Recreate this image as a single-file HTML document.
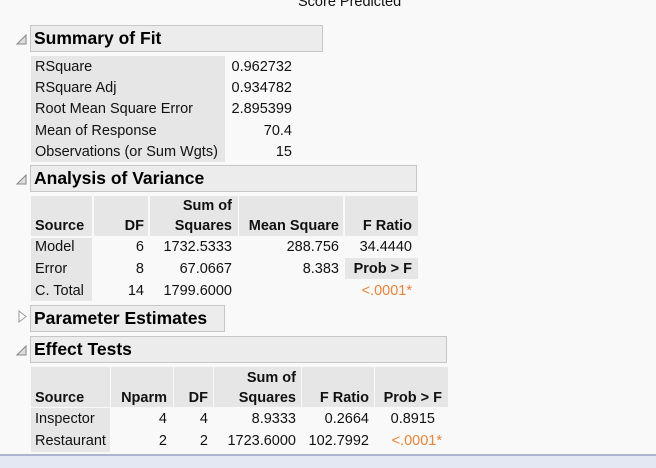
<!DOCTYPE html><html><head><style>
body{margin:0;width:656px;height:468px;background:#f9f9f9;position:relative;overflow:hidden;font-family:"Liberation Sans",sans-serif;font-size:14.5px;color:#111}
div{position:absolute;box-sizing:border-box}
.h{background:#ececec;border:1px solid #c6c6c6;font-weight:bold;font-size:17.5px;padding:2px 0 0 3px;line-height:21px;color:#000}
.g{background:#e6e6e6}
.t{white-space:nowrap;line-height:16px}
.r{text-align:right}
.b{font-weight:bold}
.o{color:#e8843a}
</style></head><body>
<div class="t" style="left:298px;top:-6px">Score Predicted</div>

<svg style="position:absolute;left:16px;top:34px" width="12" height="12"><path d="M1 10 L10 1 L10 10 Z" fill="#ddd" stroke="#888"/></svg>
<div class="h" style="left:30px;top:25px;width:293px;height:27px">Summary of Fit</div>
<div class="g" style="left:31px;top:56px;width:194px;height:106px"></div>
<div class="t" style="left:35px;top:59px">RSquare</div><div class="t r" style="left:200px;width:92px;top:59px">0.962732</div>
<div class="t" style="left:35px;top:80px">RSquare Adj</div><div class="t r" style="left:200px;width:92px;top:80px">0.934782</div>
<div class="t" style="left:35px;top:101px">Root Mean Square Error</div><div class="t r" style="left:200px;width:92px;top:101px">2.895399</div>
<div class="t" style="left:35px;top:123px">Mean of Response</div><div class="t r" style="left:200px;width:92px;top:123px">70.4</div>
<div class="t" style="left:35px;top:144px">Observations (or Sum Wgts)</div><div class="t r" style="left:200px;width:92px;top:144px">15</div>

<svg style="position:absolute;left:16px;top:174px" width="12" height="12"><path d="M1 10 L10 1 L10 10 Z" fill="#ddd" stroke="#888"/></svg>
<div class="h" style="left:30px;top:165px;width:387px;height:27px">Analysis of Variance</div>
<div class="g" style="left:31px;top:196px;width:61px;height:40px"></div>
<div class="g" style="left:94px;top:196px;width:54px;height:40px"></div>
<div class="g" style="left:150px;top:196px;width:88px;height:40px"></div>
<div class="g" style="left:239px;top:196px;width:104px;height:40px"></div>
<div class="g" style="left:345px;top:196px;width:73px;height:40px"></div>
<div class="g" style="left:31px;top:238px;width:61px;height:63px"></div>
<div class="g" style="left:345px;top:258px;width:73px;height:21px"></div>
<div class="t b" style="left:35px;top:218px">Source</div>
<div class="t b r" style="left:94px;width:50px;top:218px">DF</div>
<div class="t b r" style="left:150px;width:82px;top:198px">Sum of</div>
<div class="t b r" style="left:150px;width:82px;top:218px">Squares</div>
<div class="t b r" style="left:239px;width:100px;top:218px">Mean Square</div>
<div class="t b r" style="left:345px;width:67px;top:218px">F Ratio</div>
<div class="t" style="left:35px;top:239px">Model</div><div class="t r" style="left:94px;width:50px;top:239px">6</div><div class="t r" style="left:150px;width:82px;top:239px">1732.5333</div><div class="t r" style="left:239px;width:100px;top:239px">288.756</div><div class="t r" style="left:345px;width:67px;top:239px">34.4440</div>
<div class="t" style="left:35px;top:261px">Error</div><div class="t r" style="left:94px;width:50px;top:261px">8</div><div class="t r" style="left:150px;width:82px;top:261px">67.0667</div><div class="t r" style="left:239px;width:100px;top:261px">8.383</div><div class="t b r" style="left:345px;width:67px;top:261px">Prob &gt; F</div>
<div class="t" style="left:35px;top:283px">C. Total</div><div class="t r" style="left:94px;width:50px;top:283px">14</div><div class="t r" style="left:150px;width:82px;top:283px">1799.6000</div><div class="t r o" style="left:345px;width:67px;top:283px">&lt;.0001*</div>

<svg style="position:absolute;left:18px;top:310px" width="12" height="14"><path d="M1 1 L8 6.5 L1 12 Z" fill="#fff" stroke="#999"/></svg>
<div class="h" style="left:30px;top:305px;width:195px;height:27px">Parameter Estimates</div>

<svg style="position:absolute;left:16px;top:345px" width="12" height="12"><path d="M1 10 L10 1 L10 10 Z" fill="#ddd" stroke="#888"/></svg>
<div class="h" style="left:30px;top:336px;width:417px;height:27px">Effect Tests</div>
<div class="g" style="left:31px;top:367px;width:79px;height:40px"></div>
<div class="g" style="left:111px;top:367px;width:62px;height:40px"></div>
<div class="g" style="left:174px;top:367px;width:39px;height:40px"></div>
<div class="g" style="left:214px;top:367px;width:87px;height:40px"></div>
<div class="g" style="left:302px;top:367px;width:72px;height:40px"></div>
<div class="g" style="left:375px;top:367px;width:73px;height:40px"></div>
<div class="g" style="left:31px;top:408px;width:79px;height:44px"></div>
<div class="t b" style="left:35px;top:390px">Source</div>
<div class="t b r" style="left:111px;width:56px;top:390px">Nparm</div>
<div class="t b r" style="left:174px;width:34px;top:390px">DF</div>
<div class="t b r" style="left:214px;width:82px;top:370px">Sum of</div>
<div class="t b r" style="left:214px;width:82px;top:390px">Squares</div>
<div class="t b r" style="left:302px;width:67px;top:390px">F Ratio</div>
<div class="t b r" style="left:375px;width:67px;top:390px">Prob &gt; F</div>
<div class="t" style="left:35px;top:411px">Inspector</div><div class="t r" style="left:111px;width:56px;top:411px">4</div><div class="t r" style="left:174px;width:34px;top:411px">4</div><div class="t r" style="left:214px;width:82px;top:411px">8.9333</div><div class="t r" style="left:302px;width:67px;top:411px">0.2664</div><div class="t r" style="left:375px;width:60px;top:411px">0.8915</div>
<div class="t" style="left:35px;top:433px">Restaurant</div><div class="t r" style="left:111px;width:56px;top:433px">2</div><div class="t r" style="left:174px;width:34px;top:433px">2</div><div class="t r" style="left:214px;width:82px;top:433px">1723.6000</div><div class="t r" style="left:302px;width:67px;top:433px">102.7992</div><div class="t r o" style="left:375px;width:67px;top:433px">&lt;.0001*</div>

<div style="left:0;top:454px;width:656px;height:2px;background:#aab4cc"></div>
<div style="left:0;top:456px;width:656px;height:12px;background:#e3e8f2"></div>
</body></html>
